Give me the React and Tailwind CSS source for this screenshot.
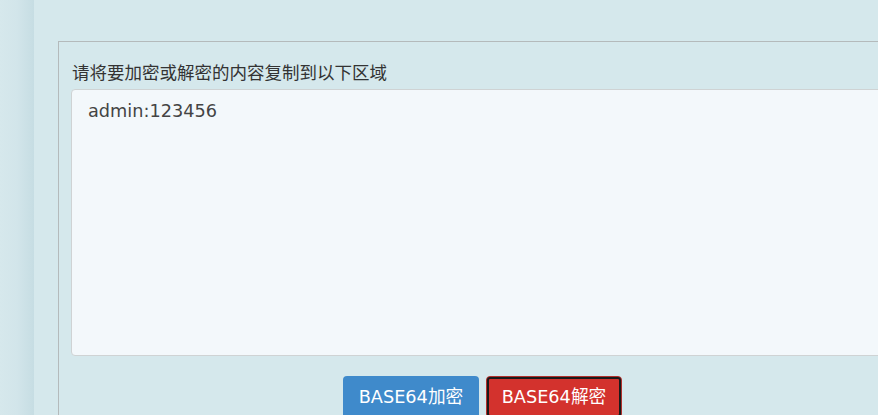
export default function App() {
  return (
    <div className="flex h-[415px] w-[878px] overflow-hidden bg-[#d5e8ec] font-['DejaVu_Sans','Noto_Sans_CJK_SC',sans-serif]">
      <div className="h-full w-[34px] shrink-0 bg-gradient-to-r from-[#d6e8ec] via-[#d2e5ea] to-[#c6dde3]" />
      <div className="shrink-0 pl-[24px] pt-[41px]">
        <div className="w-[849px] border border-[#b4babb] pl-[12px] pr-[12px] pt-[19px]">
          <p className="mb-[4px] pl-px text-[17.5px] leading-[24px] text-[#333]">请将要加密或解密的内容复制到以下区域</p>
          <div className="h-[267px] rounded-[4px] border border-[#cfd3d4] bg-[#f3f8fb] px-[16px] py-[9px] text-[17.7px] leading-[24px] text-[#444]">
            admin:123456
          </div>
          <div className="mt-[20px] flex justify-center gap-[7px]">
            <button className="h-[42px] w-[136px] rounded-[4px] bg-[#3f8acb] text-[17.7px] text-white">BASE64加密</button>
            <button className="h-[42px] w-[136px] rounded-[4px] border border-[#b1302c] bg-[#d3322d] text-[17.7px] text-white outline-2 -outline-offset-3 outline-[#1a1a1a]">BASE64解密</button>
          </div>
        </div>
      </div>
    </div>
  );
}
